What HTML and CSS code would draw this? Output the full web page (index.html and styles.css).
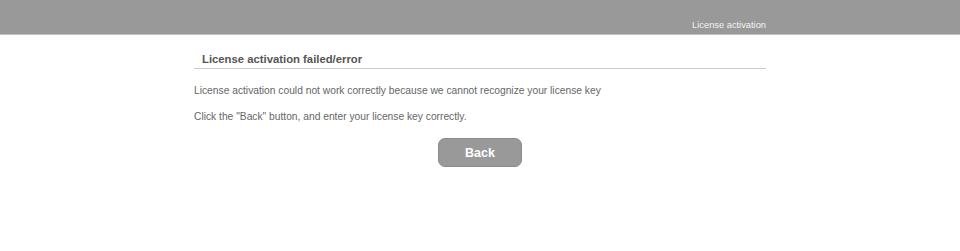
FILE: index.html
```html
<!DOCTYPE html>
<html lang="en">
<head>
    <meta charset="UTF-8">
    <title>License activation</title>
    <link rel="stylesheet" href="styles.css">
</head>
<body>
    <div class="top-bar">
        <div class="top-inner">
            <span class="top-title">License activation</span>
        </div>
    </div>

    <div class="content">
        <h2 class="page-title">License activation failed/error</h2>
        <p class="msg">License activation could not work correctly because we cannot recognize your license key</p>
        <p class="msg">Click the "Back" button, and enter your license key correctly.</p>
        <div class="actions">
            <button class="back-btn">Back</button>
        </div>
    </div>
</body>
</html>
```

FILE: styles.css
```css
* {
    margin: 0;
    padding: 0;
    box-sizing: border-box;
}

body {
    font-family: "Liberation Sans", Arial, sans-serif;
    background: #fff;
    color: #666;
}

.top-bar {
    height: 35px;
    background: #999;
    border-bottom: 1px solid #c4c4c4;
}

.top-inner {
    width: 572px;
    margin: 0 auto;
    display: flex;
    justify-content: flex-end;
    padding-top: 20px;
}

.top-title {
    font-size: 9.3px;
    color: #f4f4f4;
}

.content {
    width: 572px;
    margin: 0 auto;
    padding-top: 17px;
}

.page-title {
    font-size: 11.3px;
    font-weight: bold;
    color: #555;
    padding: 0 8px 1px;
    border-bottom: 1px solid #ccc;
    line-height: 15px;
}

.msg {
    font-size: 10.25px;
    line-height: 12px;
    margin-top: 16px;
    color: #666;
}

.msg + .msg {
    margin-top: 14px;
}

.actions {
    display: flex;
    justify-content: center;
    margin-top: 15px;
}

.back-btn {
    width: 84px;
    height: 29px;
    background: #999;
    border: 1px solid #8a8a8a;
    border-radius: 7px;
    color: #fff;
    font-family: "Liberation Sans", Arial, sans-serif;
    font-size: 12.5px;
    font-weight: bold;
}
```
